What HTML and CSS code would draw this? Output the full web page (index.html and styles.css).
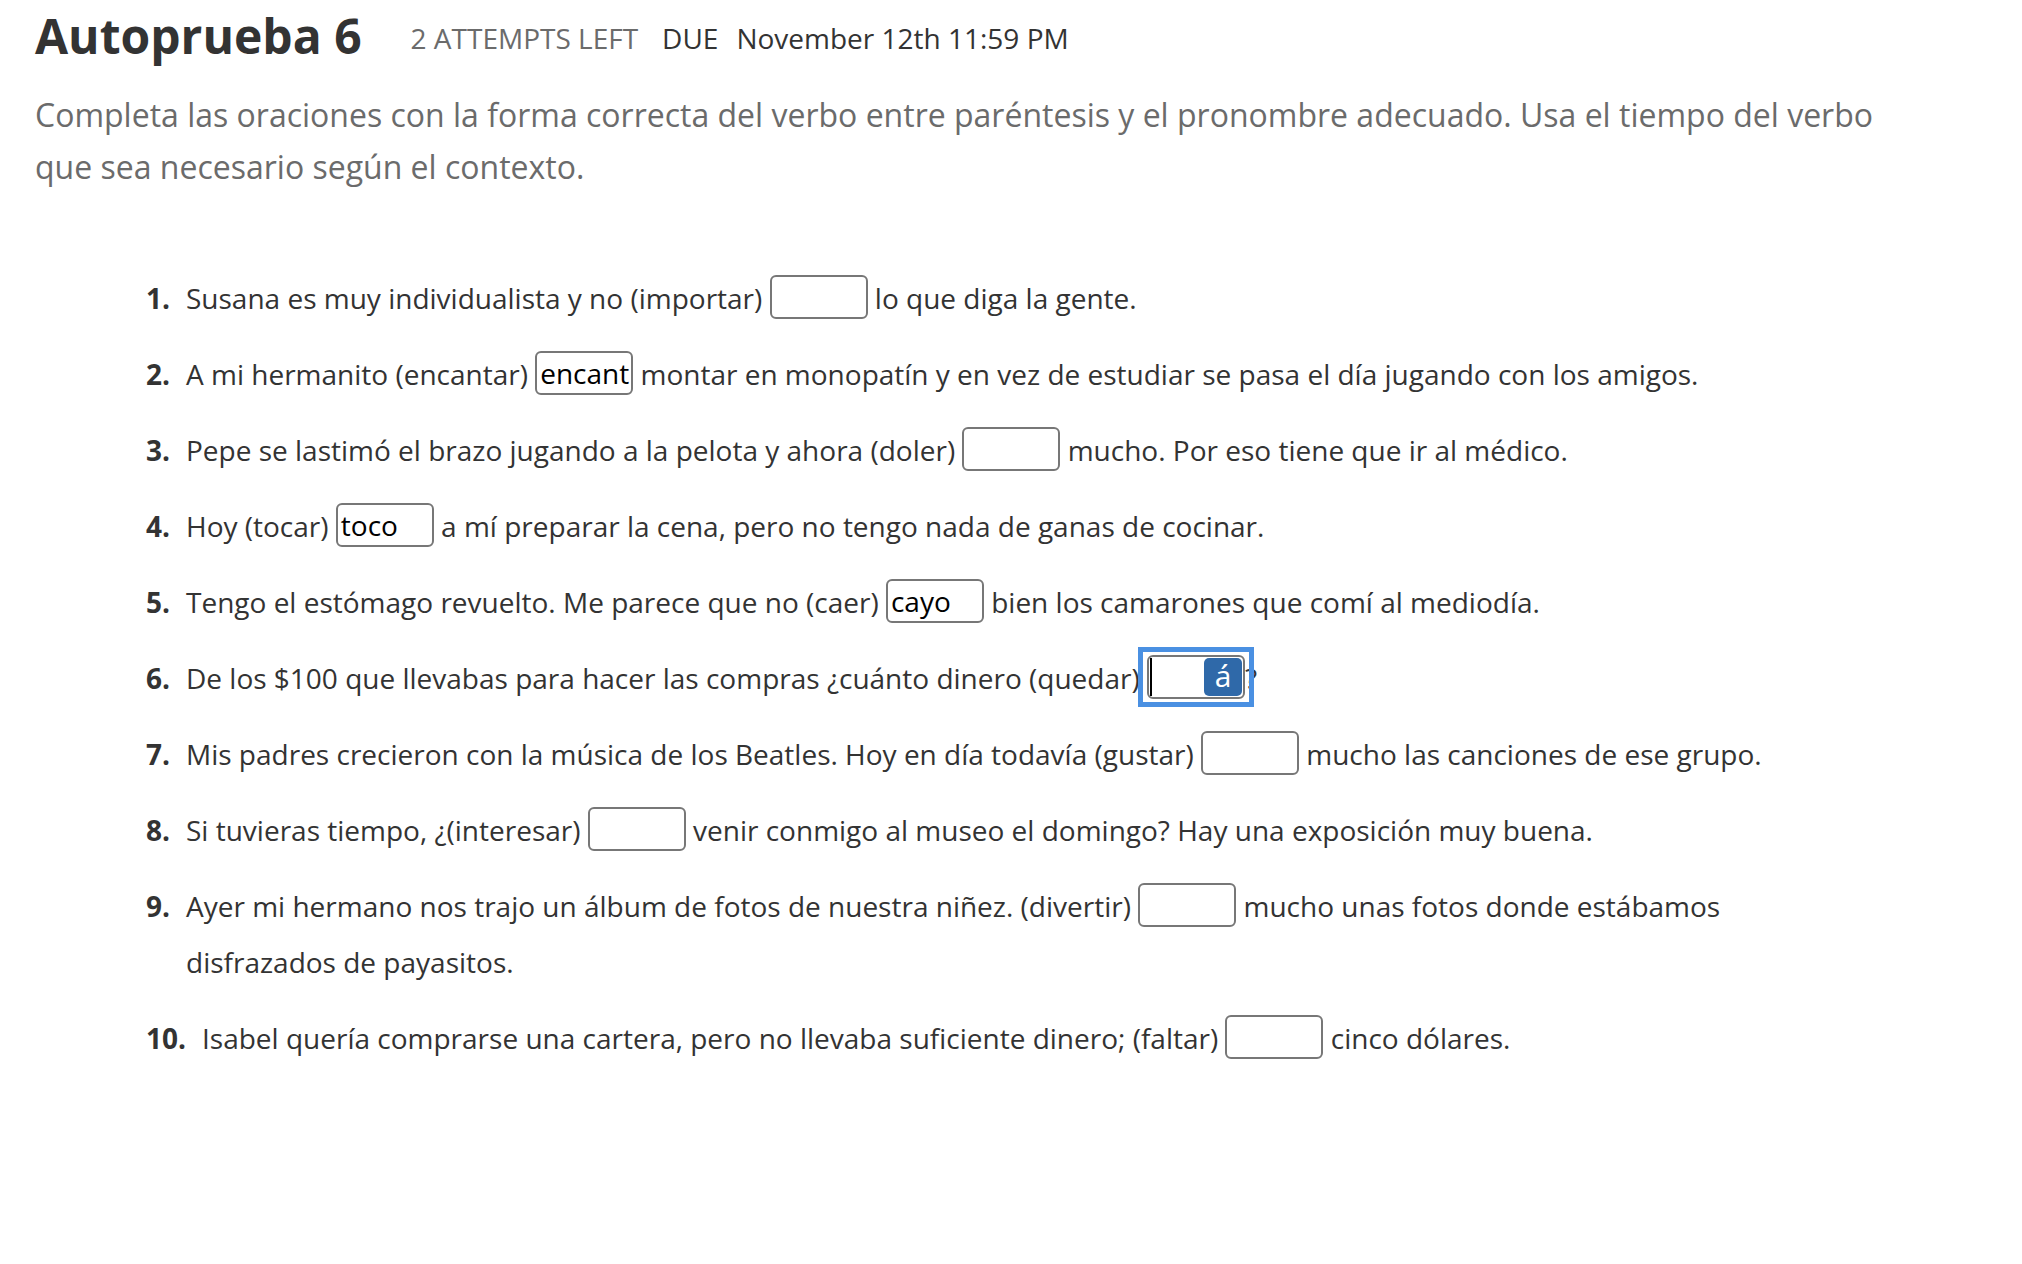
FILE: index.html
```html
<!DOCTYPE html>
<html lang="es">
<head>
<meta charset="utf-8">
<title>Autoprueba 6</title>
<link rel="stylesheet" href="styles.css">
</head>
<body>
<main class="page">
  <header class="head">
    <h1 class="title">Autoprueba 6</h1>
    <span class="meta attempts">2 ATTEMPTS LEFT</span>
    <span class="meta due-label">DUE</span>
    <span class="meta due-date">November 12th 11:59 PM</span>
  </header>
  <p class="intro">Completa las oraciones con la forma correcta del verbo entre paréntesis y el pronombre adecuado. Usa el tiempo del verbo que sea necesario según el contexto.</p>
  <ol class="items">
    <li class="item"><span class="num">1.</span><span class="text">Susana es muy individualista y no (importar) <span class="blank"></span> lo que diga la gente.</span></li>
    <li class="item"><span class="num">2.</span><span class="text">A mi hermanito (encantar) <span class="blank">encant</span> montar en monopatín y en vez de estudiar se pasa el día jugando con los amigos.</span></li>
    <li class="item"><span class="num">3.</span><span class="text">Pepe se lastimó el brazo jugando a la pelota y ahora (doler) <span class="blank"></span> mucho. Por eso tiene que ir al médico.</span></li>
    <li class="item"><span class="num">4.</span><span class="text">Hoy (tocar) <span class="blank">toco</span> a mí preparar la cena, pero no tengo nada de ganas de cocinar.</span></li>
    <li class="item"><span class="num">5.</span><span class="text">Tengo el estómago revuelto. Me parece que no (caer) <span class="blank">cayo</span> bien los camarones que comí al mediodía.</span></li>
    <li class="item"><span class="num">6.</span><span class="text">De los $100 que llevabas para hacer las compras ¿cuánto dinero (quedar) <span class="blank focus"><span class="caret"></span><span class="accent">á</span></span>?</span></li>
    <li class="item"><span class="num">7.</span><span class="text">Mis padres crecieron con la música de los Beatles. Hoy en día todavía (gustar) <span class="blank"></span> mucho las canciones de ese grupo.</span></li>
    <li class="item"><span class="num">8.</span><span class="text">Si tuvieras tiempo, ¿(interesar) <span class="blank"></span> venir conmigo al museo el domingo? Hay una exposición muy buena.</span></li>
    <li class="item"><span class="num">9.</span><span class="text">Ayer mi hermano nos trajo un álbum de fotos de nuestra niñez. (divertir) <span class="blank"></span> mucho unas fotos donde estábamos disfrazados de payasitos.</span></li>
    <li class="item"><span class="num">10.</span><span class="text">Isabel quería comprarse una cartera, pero no llevaba suficiente dinero; (faltar) <span class="blank"></span> cinco dólares.</span></li>
  </ol>
</main>
</body>
</html>
```

FILE: styles.css
```css
html, body {
  margin: 0;
  padding: 0;
  background: #fff;
}

body {
  font-family: "Open Sans", "Noto Sans", "DejaVu Sans", sans-serif;
  color: #333;
}

.page {
  padding: 4px 0 0 35px;
}

.head {
  display: flex;
  align-items: flex-start;
}

.title {
  margin: 0;
  font-size: 48px;
  line-height: 64px;
  font-weight: 700;
  color: #333;
}

.meta {
  margin-top: 15px;
  font-size: 28px;
  line-height: 38px;
  color: #333;
}

.attempts {
  margin-left: 49px;
  color: #6b6b6b;
}

.due-label {
  margin-left: 24px;
}

.due-date {
  margin-left: 18px;
}

.intro {
  margin: 21px 0 0;
  width: 1900px;
  font-size: 32px;
  line-height: 52px;
  color: #6b6b6b;
}

.items {
  list-style: none;
  margin: 77px 0 0;
  padding: 0 0 0 111px;
  width: 1690px;
}

.item {
  display: flex;
  gap: 16px;
  font-size: 28px;
  line-height: 56px;
  margin-bottom: 20px;
  color: #333;
}

.num {
  font-weight: 700;
  flex: none;
}

.text {
  flex: 1;
}

.blank {
  display: inline-block;
  box-sizing: border-box;
  width: 98px;
  height: 44px;
  padding-left: 3px;
  border: 2px solid #777;
  border-radius: 6px;
  vertical-align: -10px;
  overflow: hidden;
  line-height: 40px;
  color: #000;
  background: #fff;
}

.blank.focus {
  position: relative;
  overflow: visible;
}

.blank.focus::after {
  content: "";
  position: absolute;
  top: -10px;
  right: -11px;
  bottom: -10px;
  left: -11px;
  border: 5px solid #4a90e2;
  pointer-events: none;
}

.caret {
  position: absolute;
  left: 1px;
  top: 1px;
  width: 2px;
  height: 38px;
  background: #000;
}

.accent {
  position: absolute;
  right: 1px;
  top: 1px;
  width: 38px;
  height: 38px;
  border-radius: 5px;
  background: #2f69a9;
  color: #fff;
  font-size: 30px;
  line-height: 36px;
  text-align: center;
}
```
